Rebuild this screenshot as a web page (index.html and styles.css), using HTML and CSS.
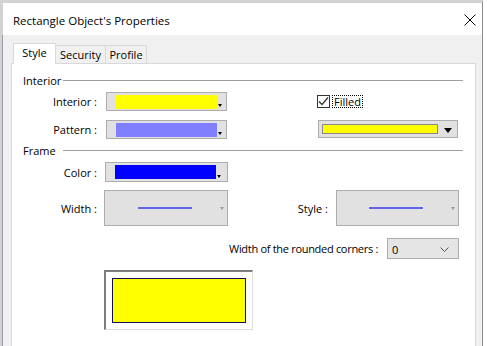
FILE: index.html
```html
<!DOCTYPE html>
<html>
<head>
<meta charset="utf-8">
<link rel="stylesheet" href="styles.css">
</head>
<body>
<div class="screen">
  <div class="win">
    <div class="titlebar">
      <span class="title">Rectangle Object's Properties</span>
      <svg class="close" width="12" height="12" viewBox="0 0 12 12"><path d="M0.5 0.5 L11.5 11.5 M11.5 0.5 L0.5 11.5" stroke="#000" stroke-width="1" fill="none"/></svg>
    </div>
    <div class="body">
      <div class="tabs">
        <div class="tab sel">Style</div>
        <div class="tab t2">Security</div>
        <div class="tab t3">Profile</div>
      </div>
      <div class="panel">
        <div class="group first"><span class="glabel">Interior</span><span class="gline"></span></div>
        <div class="row r1">
          <span class="lbl">Interior :</span>
          <div class="combo c-int"><span class="sw yellow"></span><span class="tri"></span></div>
          <label class="check"><span class="box"><svg width="11" height="11" viewBox="0 0 11 11"><path d="M1 5.5 L4 8.5 L10 1.5" stroke="#333" stroke-width="1.2" fill="none"/></svg></span><span class="ctext">Filled</span></label>
        </div>
        <div class="row r2">
          <span class="lbl">Pattern :</span>
          <div class="combo c-int"><span class="sw blue-l"></span><span class="tri"></span></div>
          <div class="fillcombo"><span class="fsw"></span><span class="ftri"></span></div>
        </div>
        <div class="group second"><span class="glabel">Frame</span><span class="gline"></span></div>
        <div class="row r3">
          <span class="lbl">Color :</span>
          <div class="combo c-col"><span class="sw blue"></span><span class="tri"></span></div>
        </div>
        <div class="row r4">
          <span class="lbl">Width :</span>
          <div class="linebox lb1"><span class="ln"></span><span class="gtri"></span></div>
          <span class="lbl2">Style :</span>
          <div class="linebox lb2"><span class="ln"></span><span class="gtri"></span></div>
        </div>
        <div class="row r5">
          <span class="lbl3">Width of the rounded corners :</span>
          <div class="sel0"><span class="val">0</span><svg width="9" height="5" viewBox="0 0 9 5"><path d="M0.5 0.5 L4.5 4.5 L8.5 0.5" stroke="#555" stroke-width="1" fill="none"/></svg></div>
        </div>
        <div class="preview"><div class="prect"></div></div>
      </div>
    </div>
  </div>
</div>
</body>
</html>
```
FILE: styles.css
```css
html, body { margin: 0; padding: 0; }
body { background: #fff; font-family: "Open Sans", "Liberation Sans", Arial, sans-serif; font-size: 11px; color: #000; }
.screen { width: 487px; height: 346px; overflow: hidden; background: #fff; }
.win { width: 479px; height: 343px; border-top: 3px solid #d2d2d2; border-left: 3px solid #d2d2d2; border-right: 1px solid #8c8c8c; }
.titlebar { height: 32px; background: #fff; display: flex; align-items: center; justify-content: space-between; padding: 2px 0 0 10px; box-sizing: border-box; }
.title { font-size: 11.5px; }
.close { margin-right: 6px; margin-top: 0px; }
.body { background: #f0f0f0; height: 311px; padding: 8px 6px 0 8px; box-sizing: border-box; border-left: 1px solid #9a9ea8; margin-left: -1px; }
.tabs { display: flex; align-items: flex-end; height: 20px; padding-left: 2px; }
.tab { box-sizing: border-box; border: 1px solid #d9d9d9; border-bottom: none; text-align: center; line-height: 17px; height: 18px; background: #f0f0f0; }
.tab.sel { background: #fff; width: 43px; height: 21px; line-height: 18px; margin-bottom: -1px; position: relative; z-index: 1; padding-bottom: 2px; }
.t2 { width: 50px; border-left: none; }
.t3 { width: 41px; border-left: none; }
.panel { background: #fff; border: 1px solid #d9d9d9; width: 465px; height: 300px; box-sizing: border-box; }
.group { display: flex; align-items: center; height: 14px; padding-left: 11px; margin-right: 12px; }
.group.first { margin-top: 9px; }
.group.second { margin-top: 4px; }
.glabel { width: 40px; }
.gline { flex: 1; height: 1px; background: #a0a0a0; }
.row { display: flex; align-items: center; }
.lbl { width: 85px; text-align: right; }
.r1 { margin-top: 5px; height: 19px; }
.r2 { margin-top: 9px; height: 19px; }
.r3 { margin-top: 5px; height: 20px; }
.r4 { margin-top: 8px; height: 36px; }
.r5 { margin-top: 12px; height: 21px; }
.combo { box-sizing: border-box; background: #e1e1e1; border: 1px solid #adadad; display: flex; align-items: center; padding-left: 9px; height: 100%; }
.c-int { margin-left: 9px; width: 121px; }
.c-col { margin-left: 8px; width: 123px; }
.sw { width: 101px; height: 14px; display: block; }
.yellow { background: #ffff00; }
.blue-l { background: #8080ff; }
.blue { background: #0000ff; }
.tri { align-self: flex-end; margin: 0 0 3px 1px; width: 0; height: 0; border-left: 2.5px solid transparent; border-right: 2.5px solid transparent; border-top: 3px solid #000; }
.check { display: flex; align-items: center; margin-left: 90px; height: 13px; }
.box { box-sizing: border-box; width: 13px; height: 13px; border: 1px solid #333; background: #fff; display: flex; align-items: center; justify-content: center; }
.ctext { margin-left: 2px; border: 1px dotted #000; line-height: 11px; padding: 0 1px; }
.fillcombo { box-sizing: border-box; margin-left: 91px; width: 140px; height: 18px; align-self: flex-start; background: #e1e1e1; border: 1px solid #adadad; display: flex; align-items: center; padding-left: 3px; }
.fsw { box-sizing: border-box; width: 116px; height: 10px; background: #ffff00; border: 1px solid #8a8a8a; }
.ftri { margin-left: 6px; width: 0; height: 0; border-left: 4.5px solid transparent; border-right: 4.5px solid transparent; border-top: 5px solid #000; margin-top: 2px; }
.linebox { box-sizing: border-box; background: #e1e1e1; border: 1px solid #adadad; height: 36px; display: flex; align-items: center; position: relative; }
.lb1 { margin-left: 7px; width: 124px; padding-left: 33px; }
.lb2 { margin-left: 8px; width: 123px; padding-left: 32px; }
.ln { width: 54px; height: 2px; background: #6464e6; }
.gtri { margin-left: auto; margin-right: 3px; width: 0; height: 0; border-left: 2.5px solid transparent; border-right: 2.5px solid transparent; border-top: 3px solid #9a9a9a; }
.lbl2 { width: 100px; text-align: right; }
.lbl3 { width: 366px; text-align: right; letter-spacing: -0.3px; }
.sel0 { box-sizing: border-box; margin-left: 9px; width: 72px; height: 21px; background: #e5e5e5; border: 1px solid #adadad; display: flex; align-items: center; justify-content: space-between; padding: 1px 9px 0 4px; }
.preview { box-sizing: border-box; margin: 11px 0 0 92px; width: 149px; height: 60px; border-top: 2px solid #7e7e7e; border-left: 2px solid #7e7e7e; border-right: 1px solid #dedede; border-bottom: 1px solid #dedede; background: #fff; padding: 6px 0 0 6px; }
.prect { box-sizing: border-box; width: 134px; height: 45px; background: #ffff00; border: 1px solid #101050; }
```
